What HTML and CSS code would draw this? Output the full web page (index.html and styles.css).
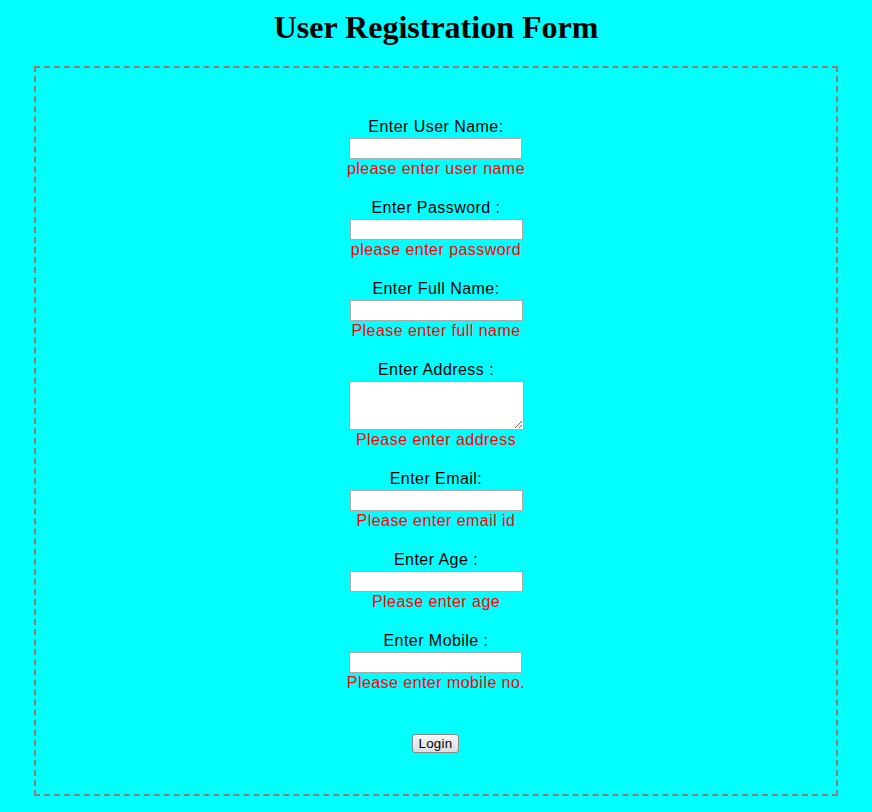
FILE: index.html
```html
<!DOCTYPE html>
<html>
<head>
<meta charset="utf-8">
<title>User Registration Form</title>
<link rel="stylesheet" href="styles.css">
</head>
<body>
<h1 class="title">User Registration Form</h1>
<form class="box">
  <div class="field">
    <label class="label">Enter User Name:</label>
    <input class="input" type="text">
    <span class="error">please enter user name</span>
  </div>
  <div class="field">
    <label class="label">Enter Password :</label>
    <input class="input" type="password">
    <span class="error">please enter password</span>
  </div>
  <div class="field">
    <label class="label">Enter Full Name:</label>
    <input class="input" type="text">
    <span class="error">Please enter full name</span>
  </div>
  <div class="field">
    <label class="label">Enter Address :</label>
    <textarea class="textarea"></textarea>
    <span class="error">Please enter address</span>
  </div>
  <div class="field">
    <label class="label">Enter Email:</label>
    <input class="input" type="text">
    <span class="error">Please enter email id</span>
  </div>
  <div class="field">
    <label class="label">Enter Age :</label>
    <input class="input" type="text">
    <span class="error">Please enter age</span>
  </div>
  <div class="field">
    <label class="label">Enter Mobile :</label>
    <input class="input" type="text">
    <span class="error">Please enter mobile no.</span>
  </div>
  <button class="btn" type="button">Login</button>
</form>
</body>
</html>
```

FILE: styles.css
```css
html, body {
  margin: 0;
  padding: 0;
  background: #00ffff;
}

body {
  font-family: "Liberation Sans", Arial, sans-serif;
  font-size: 16px;
  color: #000;
}

.title {
  font-family: "Liberation Serif", "Times New Roman", serif;
  font-size: 32px;
  font-weight: bold;
  line-height: 37px;
  text-align: center;
  margin: 9px 0 20px;
}

.box {
  box-sizing: border-box;
  width: 804px;
  height: 730px;
  margin: 0 auto;
  border: 2px dashed #808080;
  padding-top: 50px;
  display: flex;
  flex-direction: column;
  align-items: center;
}

.field {
  display: flex;
  flex-direction: column;
  align-items: center;
  margin-bottom: 21px;
}

.label {
  display: block;
  line-height: 18px;
  height: 18px;
  margin-bottom: 2px;
  white-space: nowrap;
  letter-spacing: 0.45px;
}

.input, .textarea {
  box-sizing: border-box;
  display: block;
  border: 1px solid #a9a9a9;
  background: #fff;
  margin: 0;
  padding: 1px 2px;
  font-family: "Liberation Sans", Arial, sans-serif;
  font-size: 13.33px;
  outline: none;
}

.input {
  width: 173px;
  height: 21px;
}

.textarea {
  width: 175px;
  height: 49px;
  resize: both;
}

.error {
  display: block;
  margin-top: 1px;
  color: #ff0000;
  line-height: 18px;
  height: 18px;
  white-space: nowrap;
  letter-spacing: 0.45px;
}

.btn {
  box-sizing: border-box;
  margin-top: 21px;
  margin-right: 1px;
  width: 47px;
  height: 19px;
  padding: 0;
  font-family: "Liberation Sans", Arial, sans-serif;
  font-size: 13.33px;
  line-height: 15px;
  letter-spacing: 0.3px;
  color: #000;
  border: 1px solid #8a8a8a;
  border-radius: 3px;
  background: linear-gradient(#f6f6f6, #dedede);
}
```
